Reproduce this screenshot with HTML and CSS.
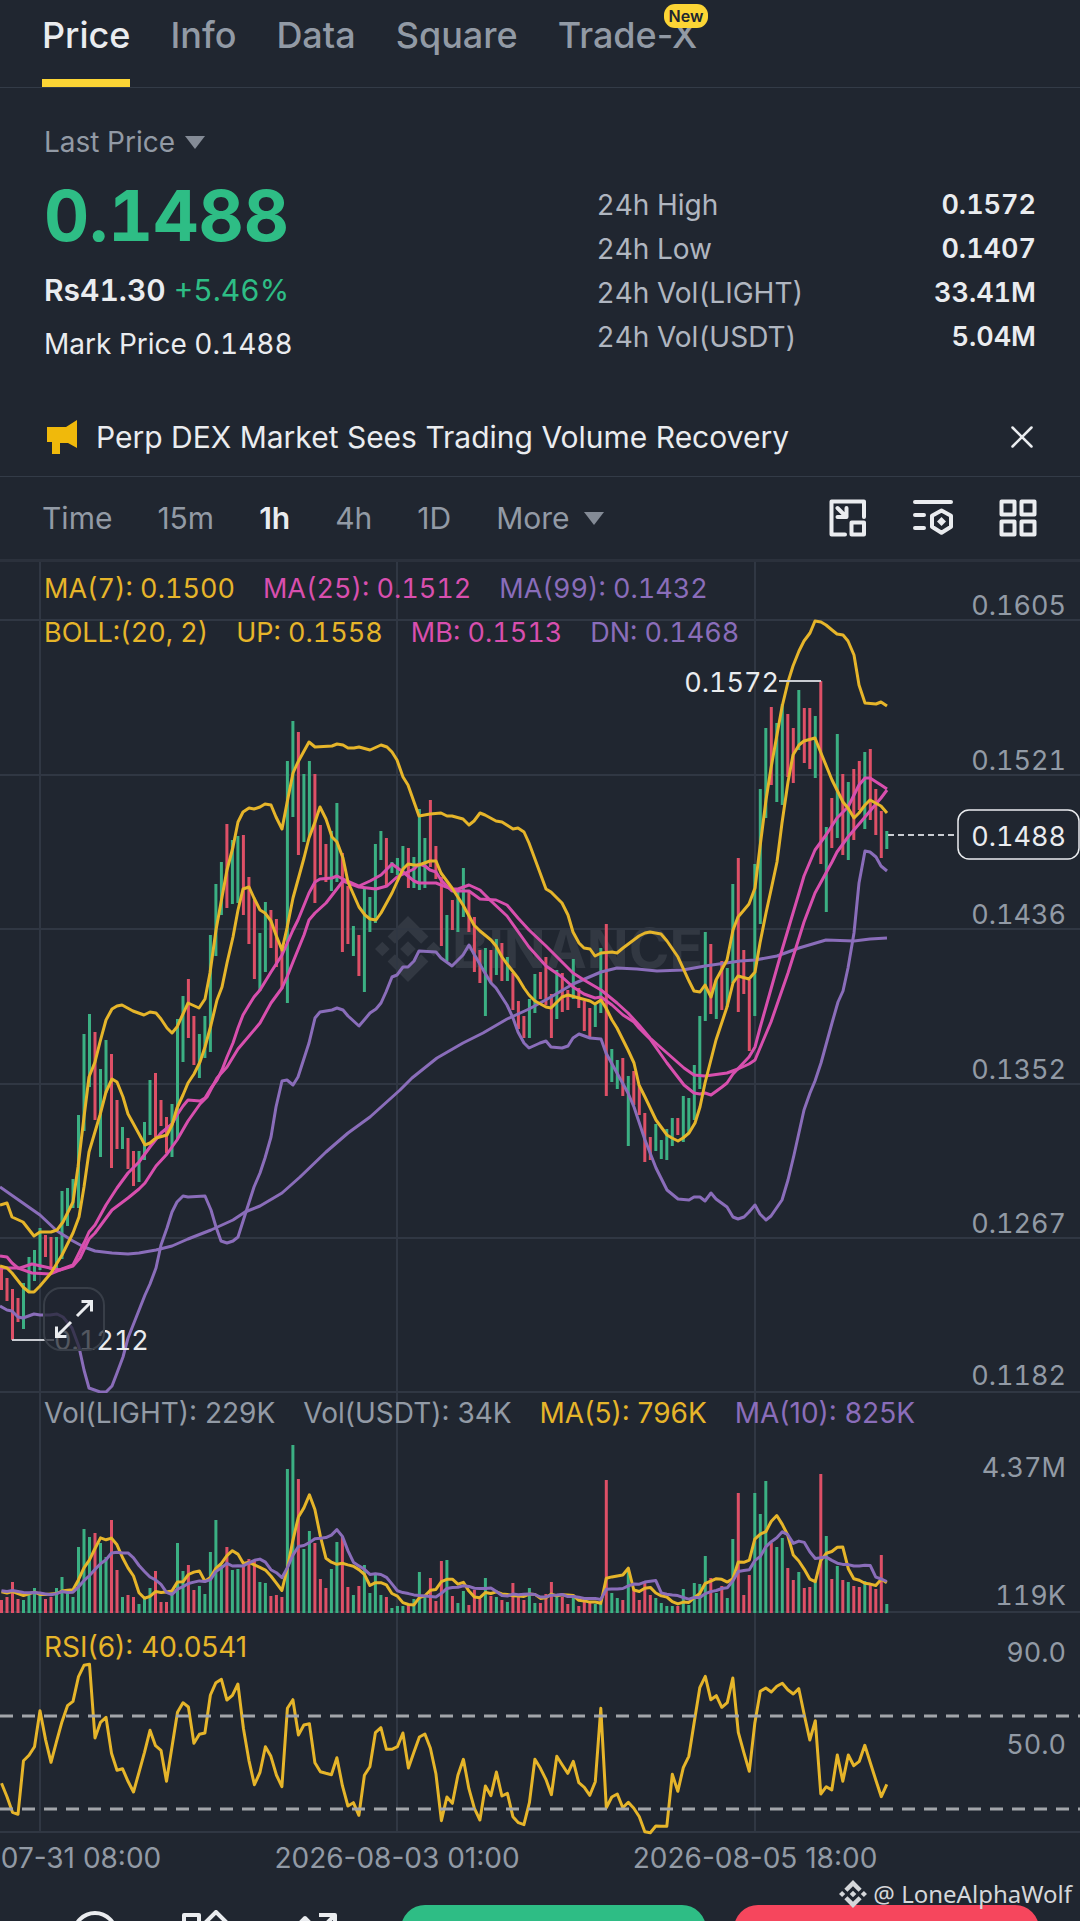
FILE: index.html
```html
<!DOCTYPE html>
<html lang="en">
<head>
<meta charset="UTF-8">
<meta name="viewport" content="width=device-width, initial-scale=1.0">
<title>LIGHTUSDT Price</title>
<link rel="stylesheet" href="styles.css">
</head>
<body>
<nav class="tabs">
    <a class="tab active" href="#price">Price</a>
    <a class="tab" href="#info">Info</a>
    <a class="tab" href="#data">Data</a>
    <a class="tab" href="#square">Square</a>
    <a class="tab" href="#trade-x">Trade-X<span class="badge">New</span></a>
</nav>

<section class="ticker" id="price">
    <div class="quote">
        <div class="price-type">
            <select aria-label="Price type">
                <option>Last Price</option>
            </select>
            <span class="caret"></span>
        </div>
        <div class="last-price">0.1488</div>
        <div class="fiat">Rs41.30 <span class="change">+5.46%</span></div>
        <div class="mark">Mark Price 0.1488</div>
    </div>
    <dl class="stats">
        <div><dt>24h High</dt><dd>0.1572</dd></div>
        <div><dt>24h Low</dt><dd>0.1407</dd></div>
        <div><dt>24h Vol(LIGHT)</dt><dd>33.41M</dd></div>
        <div><dt>24h Vol(USDT)</dt><dd>5.04M</dd></div>
    </dl>
</section>

<div class="notice">
    <svg class="horn" viewBox="0 0 32 36"><path fill="#f0b90b" d="M1 8h19L31 1v28l-9-5h-8v11H6V23H1z"/></svg>
    <a href="#news">Perp DEX Market Sees Trading Volume Recovery</a>
    <button type="button" aria-label="Close">
        <svg width="24" height="24" viewBox="0 0 24 24"><path d="M2.500 2.500l19 19M21.500 2.500l-19 19" stroke="#eaecef" stroke-width="2.500" stroke-linecap="round"/></svg>
    </button>
</div>

<div class="toolbar">
    <button type="button">Time</button>
    <button type="button">15m</button>
    <button type="button" class="active">1h</button>
    <button type="button">4h</button>
    <button type="button">1D</button>
    <button type="button" class="more">More <span class="caret"></span></button>
    <div class="tools">
        <button type="button" aria-label="Floating window">
            <svg class="icon" viewBox="0 0 40 40"><path d="M36 19V3.500H3.500V36.500H17"/><path d="M9.500 10L18 18.500M18.500 10v9h-9"/><rect x="23.500" y="24.500" width="12.500" height="12"/></svg>
        </button>
        <button type="button" aria-label="Indicators">
            <svg class="icon" viewBox="0 0 40 40"><path d="M2 4h36M2 17h9M2 30h9M28.500 12.500l9.500 5.200v11l-9.500 6-9.500-6v-11z"/><path class="solid" d="M28.500 19l4.500 4.500-4.500 4.500-4.500-4.500z"/></svg>
        </button>
        <button type="button" aria-label="Layout">
            <svg class="icon" viewBox="0 0 40 40"><rect x="3.500" y="3.500" width="13" height="13"/><rect x="23.500" y="3.500" width="13" height="13"/><rect x="3.500" y="23.500" width="13" height="13"/><rect x="23.500" y="23.500" width="13" height="13"/></svg>
        </button>
    </div>
</div>

<main class="chart">
    <div class="pane">
        <svg id="pricePane" viewBox="0 562 1080 831"></svg>
        <div class="legend price">
            <div class="legend-row">
                <span class="yellow">MA(7): 0.1500</span>
                <span class="pink">MA(25): 0.1512</span>
                <span class="purple">MA(99): 0.1432</span>
            </div>
            <div class="legend-row">
                <span class="yellow">BOLL:(20, 2)</span>
                <span class="yellow">UP: 0.1558</span>
                <span class="pink">MB: 0.1513</span>
                <span class="purple">DN: 0.1468</span>
            </div>
        </div>
        <button type="button" class="expand" aria-label="Full screen">
            <svg width="40" height="40" viewBox="0 0 40 40"><path d="M23 17L37 3M27.500 2.500H37.500V12.500M17 23L3 37M2.500 27.500V37.500H12.500"/></svg>
        </button>
    </div>
    <div class="pane">
        <svg id="volumePane" viewBox="0 1393 1080 220"></svg>
        <div class="legend volume">
            <div class="legend-row">
                <span>Vol(LIGHT): 229K</span>
                <span>Vol(USDT): 34K</span>
                <span class="yellow">MA(5): 796K</span>
                <span class="purple">MA(10): 825K</span>
            </div>
        </div>
    </div>
    <div class="pane">
        <svg id="rsiPane" viewBox="0 1613 1080 273"></svg>
        <div class="legend rsi">
            <div class="legend-row"><span class="yellow">RSI(6): 40.0541</span></div>
        </div>
    </div>
</main>

<footer class="actions">
    <a href="#more" aria-label="More"><svg viewBox="0 0 48 48"><circle cx="24" cy="24" r="21"/><path d="M14 24h.1M24 24h.1M34 24h.1"/></svg></a>
    <a href="#hub" aria-label="Hub"><svg viewBox="0 0 48 48"><path d="M3 5h15v15H3zM3 28h15v15H3zM27 28h15v15H27zM35 2l10 10-10 10-10-10z"/></svg></a>
    <a href="#margin" aria-label="Margin"><svg viewBox="0 0 48 48"><path d="M28 5h16v16M44 5L27 22M2 20L14 8l8 8"/></svg></a>
    <button type="button" class="buy" aria-label="Long"></button>
    <button type="button" class="sell" aria-label="Short"></button>
</footer>

<div class="credit">
    <svg width="28" height="28" viewBox="0 0 126 126"><path d="M38 53l25-25 25 25 14-14L63 0 24 39zM0 63l14-14 14 14-14 14zM38 73l25 25 25-25 14 14-39 39-39-39zM98 63l14-14 14 14-14 14zM78 63L63 48 48 63l15 15z"/></svg>
    <span>@ LoneAlphaWolf</span>
</div>
<script src="chart.js"></script>
</body>
</html>
```

FILE: styles.css
```css
* {
    box-sizing: border-box;
}
body {
    margin: 0;
    height: 100vh;
    overflow: hidden;
    position: relative;
    background-color: #202630;
    color: #eaecef;
    font-family: Inter, "Liberation Sans", sans-serif;
    font-size: 28px;
    line-height: 36px;
}
a {
    color: inherit;
    text-decoration: none;
}
button, select {
    font: inherit;
    color: inherit;
    background: none;
    border: none;
    padding: 0;
    margin: 0;
    cursor: pointer;
}
select {
    appearance: none;
}
.tabs {
    display: flex;
    gap: 40px;
    height: 88px;
    padding: 0 42px;
    border-bottom: 1px solid #333b47;
    font-size: 36px;
    color: #929aa5;
}
.tab {
    position: relative;
    padding-top: 17px;
    font-weight: 500;
}
.tab.active {
    color: #eaecef;
    border-bottom: 8px solid #fcd535;
}
.badge {
    position: absolute;
    top: 4px;
    right: -11px;
    height: 24px;
    padding: 0 5px;
    border-radius: 11px;
    background-color: #fcd535;
    color: #202630;
    font-size: 16px;
    font-weight: 600;
    line-height: 24px;
}
.caret {
    display: inline-block;
    border: 10px solid transparent;
    border-top: 13px solid #848b96;
    border-bottom: 0;
}
.ticker {
    display: flex;
    justify-content: space-between;
    padding: 36px 44px 0;
    height: 310px;
    font-variant-numeric: tabular-nums;
}
.price-type {
    display: flex;
    align-items: center;
    gap: 10px;
    color: #929aa5;
}
.last-price {
    margin-top: 18px;
    font-size: 70px;
    font-weight: 700;
    line-height: 76px;
    color: #2ebd85;
}
.fiat {
    margin-top: 18px;
    font-size: 30px;
    font-weight: 600;
}
.change {
    font-weight: 400;
    color: #2ebd85;
}
.mark {
    margin-top: 18px;
}
.stats {
    width: 44.300%;
    margin: 59px 0 0;
}
.stats div {
    display: flex;
    justify-content: space-between;
    height: 44px;
    line-height: 44px;
}
.stats dt {
    color: #b0b6c0;
}
.stats dd {
    margin: 0;
    font-size: 27px;
    font-weight: 600;
}
.notice {
    display: flex;
    align-items: center;
    gap: 18px;
    height: 79px;
    padding: 0 46px;
    border-bottom: 1px solid #333b47;
    font-size: 30px;
}
.notice button {
    display: flex;
    margin-left: auto;
}
.horn {
    width: 32px;
    height: 36px;
}
.toolbar {
    display: flex;
    align-items: center;
    gap: 45px;
    height: 85px;
    padding: 0 42px;
    border-bottom: 3px solid #2b313c;
    font-size: 30px;
    color: #929aa5;
}
.toolbar .active {
    color: #eaecef;
    font-weight: 600;
}
.more {
    display: flex;
    align-items: center;
    gap: 14px;
}
.tools {
    display: flex;
    gap: 45px;
    margin-left: auto;
}
.tools button {
    display: flex;
}
.icon {
    width: 40px;
    height: 40px;
    fill: none;
    stroke: #eaecef;
    stroke-width: 4;
    stroke-linecap: round;
    stroke-linejoin: round;
}
.icon .solid {
    fill: #eaecef;
    stroke: none;
}
.pane {
    position: relative;
}
.pane > svg {
    display: block;
    width: 100%;
}
.pane text {
    font-size: 28px;
    fill: #929aa5;
}
.pane .axis, .pane .value {
    font-size: 27px;
    font-variant-numeric: tabular-nums;
}
.legend {
    position: absolute;
    left: 44px;
    color: #929aa5;
}
.legend.price {
    top: 5px;
    font-size: 27px;
    font-variant-numeric: tabular-nums;
}
.legend.volume {
    top: -2px;
}
.legend.rsi {
    top: 12px;
}
.legend-row {
    display: flex;
    gap: 28px;
    height: 44px;
    line-height: 44px;
    white-space: nowrap;
}
.yellow {
    color: #e6b52a;
}
.pink {
    color: #d84fae;
}
.purple {
    color: #8a6dba;
}
.pane .value {
    fill: #eaecef;
}
.pane .brand {
    fill: #323842;
    font-size: 55px;
    font-weight: 700;
}
.logo {
    fill: #323842;
}
.grid {
    stroke: #303743;
    stroke-width: 2;
}
.line {
    fill: none;
    stroke-width: 3;
    stroke-linejoin: round;
}
.line.yellow {
    stroke: #e6b52a;
}
.line.pink {
    stroke: #d84fae;
}
.line.purple {
    stroke: #8a6dba;
}
.up {
    fill: #3bb083;
}
.down {
    fill: #de5067;
}
.pointer {
    stroke: #c9ccd2;
    stroke-width: 2;
}
.dashed {
    stroke-dasharray: 6 4;
}
.level {
    stroke: #a2a5aa;
    stroke-width: 3;
    stroke-dasharray: 13 9;
}
.tag {
    fill: #202630;
    stroke: #eaecef;
    stroke-width: 1.500;
}
.expand {
    position: absolute;
    left: 43px;
    bottom: 42px;
    display: flex;
    align-items: center;
    justify-content: center;
    width: 62px;
    height: 64px;
    border: 2px solid #383e48;
    border-radius: 18px;
    background-color: rgba(32, 38, 48, 0.75);
}
.expand path {
    fill: none;
    stroke: #eaecef;
    stroke-width: 3;
}
.actions {
    display: flex;
    gap: 28px;
    padding: 19px 41px 24px 71px;
}
.actions a {
    padding-top: 5px;
    width: 82px;
}
.actions svg {
    width: 48px;
    height: 48px;
    fill: none;
    stroke: #eaecef;
    stroke-width: 4;
    stroke-linejoin: round;
}
.actions button {
    flex: 1;
    height: 88px;
    border-radius: 24px;
}
.actions .buy {
    background-color: #2ebd85;
}
.actions .sell {
    background-color: #f6465d;
}
.credit {
    position: absolute;
    right: 8px;
    bottom: 9px;
    display: flex;
    align-items: center;
    gap: 6px;
    color: #d5d7da;
    font-family: "Noto Sans", sans-serif;
    font-size: 24px;
}
.credit path {
    fill: #d5d7da;
}
```

FILE: chart.js
```js
// bar spacing, one bar per hour
const STEP = 5.4985;
const FIRST = 1.5;
const barX = i => FIRST + i * STEP;

// high / low of each bar
const candles = [
    [1267,1290],[1278,1301],[1289,1340],[1298,1322],[1283,1329],[1257,1293],[1250,1281],[1228,1270],
    [1235,1257],[1237,1270],[1237,1268],[1191,1259],[1188,1226],[1179,1208],[1115,1208],[1034,1131],
    [1014,1087],[1032,1120],[1069,1157],[1040,1093],[1054,1168],[1100,1149],[1127,1149],[1138,1169],
    [1151,1186],[1151,1182],[1122,1160],[1080,1135],[1073,1137],[1100,1126],[1117,1153],[1104,1157],
    [1019,1140],[996,1062],[979,1038],[1016,1065],[1034,1078],[1016,1058],[935,1052],[884,956],
    [862,915],[824,908],[840,904],[836,903],[835,915],[877,944],[900,979],[933,991],
    [902,972],[910,948],[919,967],[950,989],[761,1003],[721,817],[732,855],[774,842],
    [761,837],[774,903],[825,875],[844,882],[831,891],[803,882],[853,952],[886,944],
    [926,956],[935,976],[889,992],[897,932],[844,923],[831,860],[838,886],[862,873],
    [858,875],[846,872],[848,888],[857,888],[809,890],[838,888],[800,867],[846,879],
    [877,946],[915,961],[900,930],[890,932],[868,917],[891,932],[917,972],[950,983],
    [948,1016],[950,983],[939,975],[943,981],[957,981],[973,1010],[1001,1029],[1016,1038],
    [999,1038],[974,1013],[972,999],[957,1005],[994,1038],[970,1019],[973,1012],[990,1010],
    [959,999],[988,1008],[1001,1031],[1008,1037],[1005,1027],[948,1013],[924,1096],[1049,1082],
    [1060,1089],[1058,1096],[1076,1146],[1071,1105],[1085,1115],[1113,1162],[1137,1160],[1124,1151],
    [1140,1159],[1129,1160],[1118,1146],[1118,1135],[1096,1142],[1098,1133],[1065,1120],[1016,1089],
    [932,1021],[944,1014],[980,1019],[961,1010],[968,1007],[884,983],[858,1012],[950,994],
    [980,1051],[864,1016],[789,924],[728,818],[707,785],[723,802],[704,805],[714,777],
    [728,783],[690,750],[708,763],[708,769],[716,778],[681,864],[827,912],[798,848],
    [734,838],[774,855],[782,860],[769,840],[761,810],[752,829],[749,820],[789,835],
    [811,858],[831,849]
];

const greenBars = new Set([
    4,5,6,7,10,11,12,13,14,15,16,18,19,22,25,26,27,31,32,33,36,37,38,39,40,42,43,47,48,52,53,55,56,
    60,61,64,66,67,68,69,71,72,73,75,76,77,81,83,84,88,90,92,96,97,101,104,108,109,111,112,114,
    119,120,121,122,124,125,126,127,128,130,132,133,137,138,139,141,142,145,148,150,152,154,157,161
]);

const volumes = [
    39,49,93,42,40,64,74,57,41,47,74,109,69,49,198,253,228,239,209,169,278,128,48,53,48,26,47,75,
    125,34,34,64,210,126,143,70,82,56,182,280,144,199,129,131,141,161,159,92,91,52,55,48,432,504,
    401,191,245,211,101,74,131,213,227,77,54,80,143,59,119,53,47,14,21,21,24,42,122,49,104,37,157,
    159,50,29,66,24,69,42,106,52,47,39,33,89,47,39,75,29,29,57,93,49,47,26,47,21,41,29,27,27,398,
    61,44,40,129,71,39,91,54,45,29,21,21,21,72,24,91,87,171,106,60,82,44,222,359,54,114,359,297,
    396,211,199,226,134,98,123,75,78,96,417,230,102,142,98,92,81,78,97,85,72,174,26
];

const rsi = [
    490,530,577,583,422,406,380,272,358,427,365,305,257,244,170,136,133,354,307,292,400,451,446,
    484,516,457,397,331,377,391,484,380,277,248,261,370,343,339,225,188,178,240,226,192,325,421,
    494,458,380,409,465,500,265,239,345,315,311,428,455,460,464,413,497,558,548,586,466,440,338,
    323,388,388,380,339,444,397,351,342,385,461,602,531,550,466,418,506,565,600,498,527,456,528,
    520,590,608,614,548,418,445,478,524,409,435,460,424,488,502,526,485,265,563,531,522,563,547,
    565,590,635,638,618,619,619,463,514,443,409,305,203,169,239,227,262,248,174,337,397,454,310,
    214,204,216,199,190,209,222,206,285,360,302,522,500,510,405,484,405,437,424,376,428,480,530,493
];

const bollUp = '0,1205 7,1203 12,1217 23,1222 34,1236 40,1232 51,1232 57,1230 63,1222 73,1202 78,1167 84,1117 89,1077 95,1062 100,1042 106,1020 112,1009 117,1006 122,1005 133,1011 144,1015 150,1012 156,1013 161,1019 167,1028 172,1033 177,1027 188,1003 199,1008 205,999 210,973 216,930 222,897 227,870 233,847 238,822 243,812 249,808 254,809 260,807 265,804 271,805 276,817 282,829 287,803 293,773 298,762 309,742 315,747 332,746 337,744 343,745 348,748 354,748 359,747 370,750 381,745 387,747 392,752 397,760 403,777 408,785 419,816 430,814 441,813 447,816 452,816 463,819 469,825 474,821 480,813 485,815 496,821 502,822 513,829 518,828 524,832 529,843 546,889 551,892 562,903 568,915 573,932 579,943 584,948 590,949 595,956 601,953 612,952 617,953 623,948 639,936 645,933 650,932 661,934 667,941 678,957 689,981 694,991 700,992 705,985 711,997 716,980 727,960 733,930 738,917 744,910 749,904 755,888 760,847 766,800 771,768 782,707 788,682 793,666 799,651 804,641 810,633 815,621 821,622 826,625 832,630 837,634 843,635 848,641 854,655 859,685 865,703 876,704 881,702 887,706';

const ma7 = '0,1266 7,1268 12,1273 23,1287 29,1292 34,1292 40,1286 51,1273 62,1255 73,1233 79,1217 84,1187 89,1152 100,1115 106,1092 112,1079 117,1082 123,1097 128,1114 133,1123 145,1145 150,1143 156,1138 167,1135 172,1125 177,1108 183,1095 188,1083 194,1074 200,1062 205,1047 211,1025 217,1000 222,987 227,963 233,937 238,910 243,889 249,887 254,898 260,910 265,913 271,921 276,935 282,950 287,928 293,898 304,858 309,838 315,822 320,807 326,819 332,837 337,842 343,858 348,882 359,907 365,915 370,919 376,920 381,913 392,893 397,882 403,869 408,864 414,865 419,865 430,861 436,861 441,873 452,888 463,905 474,925 480,931 491,940 496,946 502,957 507,964 518,978 524,988 529,995 535,1001 546,1007 551,1008 557,1002 562,997 568,995 579,998 590,1001 595,1004 601,1000 606,1008 612,1020 617,1028 628,1050 634,1063 639,1085 645,1097 656,1120 667,1135 672,1138 678,1141 683,1138 689,1133 695,1123 700,1107 705,1083 716,1040 727,1007 733,983 738,976 749,979 755,972 760,943 766,913 771,890 777,862 782,823 788,782 793,755 799,745 804,741 815,738 821,753 832,780 843,802 848,808 854,818 859,813 865,805 870,800 881,806 887,813';

const bollMid = '0,1256 7,1257 12,1263 18,1268 32,1273 50,1274 62,1269 73,1265 78,1255 84,1243 89,1232 95,1225 106,1205 117,1188 128,1173 139,1162 150,1147 161,1133 172,1124 177,1115 183,1106 188,1100 200,1101 205,1098 211,1088 217,1080 222,1070 227,1057 233,1043 238,1028 243,1015 249,1005 254,997 260,990 271,972 282,955 293,930 298,920 309,893 315,882 320,879 332,878 337,876 343,879 359,886 370,881 381,875 392,864 403,872 414,881 419,883 436,883 441,885 452,889 458,889 469,885 480,890 491,901 507,916 529,947 546,966 562,977 573,987 584,994 595,998 601,997 612,1005 623,1015 634,1022 639,1028 650,1039 667,1063 684,1085 694,1093 700,1094 705,1093 711,1095 722,1087 727,1083 733,1074 749,1057 755,1047 760,1028 771,989 782,950 799,893 804,876 815,850 826,835 837,818 848,807 859,785 865,778 870,778 881,785 887,789';

const ma25 = '0,1268 20,1268 32,1264 50,1268 60,1270 73,1266 80,1258 89,1239 95,1233 112,1210 128,1198 139,1189 145,1183 156,1166 167,1154 177,1140 188,1121 200,1104 207,1097 217,1078 227,1067 238,1049 260,1023 271,1003 282,988 287,977 293,962 304,935 309,920 315,913 326,903 343,881 359,887 376,889 387,886 397,877 414,869 419,864 425,866 430,870 436,872 441,880 452,891 469,891 480,899 496,900 507,905 518,918 529,930 546,946 573,973 584,980 601,990 617,1003 628,1013 639,1025 650,1038 667,1053 684,1068 694,1075 705,1076 727,1073 738,1069 749,1064 755,1060 760,1048 771,1022 788,973 799,938 804,922 815,893 832,862 837,852 848,837 865,817 881,798 887,790';

const bollDown = '0,1306 7,1310 12,1311 18,1317 23,1318 34,1314 40,1315 50,1315 57,1314 63,1317 72,1328 79,1347 84,1370 89,1388 100,1392 106,1392 112,1386 117,1373 123,1357 128,1338 145,1295 150,1284 156,1268 161,1245 167,1228 172,1212 177,1202 183,1196 188,1197 205,1196 211,1210 216,1227 221,1241 227,1243 233,1241 238,1237 245,1215 254,1187 260,1173 265,1158 271,1137 276,1107 282,1081 287,1080 293,1085 298,1077 309,1043 315,1018 320,1012 332,1010 337,1008 343,1010 348,1016 359,1026 365,1019 370,1013 376,1009 381,1003 386,992 392,977 397,975 403,967 408,967 414,961 419,951 436,952 441,958 452,966 463,955 469,945 474,954 485,973 491,983 496,988 507,1005 513,1018 518,1032 524,1043 529,1048 540,1043 546,1041 551,1047 562,1048 568,1046 573,1038 579,1034 590,1038 601,1039 606,1053 617,1073 628,1093 634,1107 639,1122 645,1140 656,1168 667,1190 678,1199 689,1200 694,1197 700,1197 705,1201 711,1193 716,1199 727,1207 733,1217 738,1219 744,1217 749,1212 755,1205 760,1214 766,1220 771,1216 782,1200 788,1180 794,1155 804,1110 810,1093 815,1081 821,1063 832,1023 838,1002 843,991 848,968 854,933 859,883 865,851 870,852 876,857 881,866 887,871';

const ma99 = '0,1187 40,1215 57,1231 73,1241 84,1247 95,1251 112,1253 128,1254 139,1253 156,1250 172,1246 188,1239 211,1230 233,1220 245,1212 260,1206 282,1193 300,1177 326,1152 348,1133 370,1117 400,1090 412,1078 437,1058 463,1043 483,1033 507,1019 529,1009 551,997 573,984 601,972 617,968 637,969 657,971 683,970 705,966 740,961 755,960 777,956 799,948 826,940 854,941 870,939 887,938';

const hLine = (y, cls = 'grid') => `<line class="${cls}" x1="0" x2="1080" y1="${y}" y2="${y}"/>`;
const vLines = (y1, y2) => [40, 397, 755].map(x => `<line class="grid" x1="${x}" x2="${x}" y1="${y1}" y2="${y2}"/>`).join('');
const line = (points, cls) => `<polyline class="line ${cls}" points="${points}"/>`;
const axis = (y, text, cls = 'axis') => `<text class="${cls}" x="1066" y="${y}" text-anchor="end">${text}</text>`;
const bar = (i, top, bottom) =>
    `<rect class="${greenBars.has(i) ? 'up' : 'down'}" x="${(barX(i) - 1.5).toFixed(1)}" y="${top}" width="3" height="${bottom - top}"/>`;

function average(values, n) {
    return values.map((v, i) => {
        const part = values.slice(Math.max(0, i - n + 1), i + 1);
        // the first bars have no history on screen
        while (part.length < n) part.push(70);
        return part.reduce((a, b) => a + b, 0) / n;
    });
}

function drawPrice() {
    const logo = 'M38 53l25-25 25 25 14-14L63 0 24 39zM0 63l14-14 14 14-14 14zM38 73l25 25 25-25 14 14-39 39-39-39zM98 63l14-14 14 14-14 14zM78 63L63 48 48 63l15 15z';
    const labels = ['0.1605', '0.1521', '0.1436', '0.1352', '0.1267', '0.1182'];
    const labelY = [615, 770, 924, 1079, 1233, 1385];
    document.getElementById('pricePane').innerHTML =
        `<svg x="375" y="916" width="66" height="66" viewBox="0 0 126 126"><path class="logo" d="${logo}"/></svg>` +
        '<text class="brand" x="452" y="968">BINANCE</text>' +
        [620, 775, 929, 1084, 1238, 1392].map(y => hLine(y)).join('') +
        vLines(562, 1393) +
        candles.map((c, i) => bar(i, c[0], c[1])).join('') +
        line(ma99, 'purple') + line(bollDown, 'purple') +
        line(ma25, 'pink') + line(bollMid, 'pink') +
        line(ma7, 'yellow') + line(bollUp, 'yellow') +
        labels.map((t, i) => axis(labelY[i], t)).join('') +
        '<line class="pointer" x1="779" x2="821" y1="681" y2="681"/>' +
        '<text class="value" x="779" y="692" text-anchor="end">0.1572</text>' +
        '<line class="pointer" x1="12" x2="54" y1="1340" y2="1340"/>' +
        '<text class="value" x="54" y="1350">0.1212</text>' +
        '<line class="pointer dashed" x1="888" x2="957" y1="835" y2="835"/>' +
        '<rect class="tag" x="958" y="810" width="121" height="49" rx="11"/>' +
        axis(846, '0.1488', 'value');
}

function drawVolume() {
    const base = 1613;
    const y = v => base - v / 3;
    const path = values => values.map((v, i) => `${barX(i).toFixed(1)},${y(v).toFixed(1)}`).join(' ');
    document.getElementById('volumePane').innerHTML =
        vLines(1393, base) + hLine(base - 1) +
        volumes.map((v, i) => bar(i, Math.round(y(v)), base)).join('') +
        line(path(average(volumes, 5)), 'yellow') +
        line(path(average(volumes, 10)), 'purple') +
        axis(1477, '4.37M') + axis(1605, '119K');
}

function drawRsi() {
    const points = rsi.map((v, i) => `${barX(i).toFixed(1)},${(1620 + v / 3).toFixed(1)}`).join(' ');
    document.getElementById('rsiPane').innerHTML =
        vLines(1613, 1832) + hLine(1832) +
        line(points, 'yellow') +
        hLine(1716, 'level') + hLine(1809, 'level') +
        axis(1662, '90.0') + axis(1754, '50.0') +
        '<text x="40" y="1868" text-anchor="middle">2026-07-31 08:00</text>' +
        '<text x="397" y="1868" text-anchor="middle">2026-08-03 01:00</text>' +
        '<text x="755" y="1868" text-anchor="middle">2026-08-05 18:00</text>';
}

drawPrice();
drawVolume();
drawRsi();
```
